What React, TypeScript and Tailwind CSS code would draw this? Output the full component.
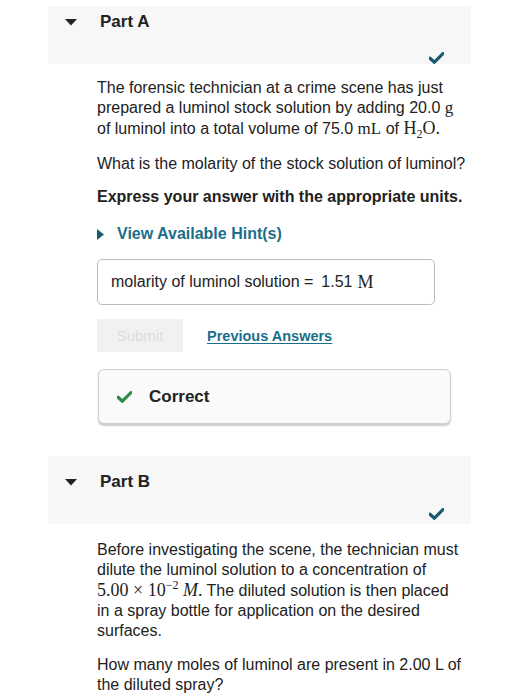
import React from 'react';

const Caret = ({ className = '' }: { className?: string }) => (
  <svg width="12" height="7" viewBox="0 0 12 7" className={className}>
    <path d="M0 0 L12 0 L6 6.5 Z" fill="#222" />
  </svg>
);

const Tick = ({ color }: { color: string }) => (
  <svg width="15" height="12" viewBox="0 0 15 12">
    <path d="M1 6.2 L5.4 10.2 L14 1.6" fill="none" stroke={color} strokeWidth="3.2" strokeLinecap="round" strokeLinejoin="round" />
  </svg>
);

const math = "font-['Liberation_Serif',serif] whitespace-nowrap";

function PartHeader({ label, tall }: { label: string; tall?: boolean }) {
  return (
    <div className={`mx-[48px] w-[423px] bg-[#f7f7f7] relative ${tall ? 'h-[68px] pt-[14px]' : 'h-[58px] pt-[4px]'}`}>
      <div className="flex items-center h-[24px]">
        <Caret className="ml-[17px]" />
        <span className="ml-[23px] text-[17px] font-bold text-[#222]">{label}</span>
      </div>
      <div className={`absolute left-[381px] ${tall ? 'top-[52px]' : 'top-[46px]'}`}>
        <Tick color="#1b5b70" />
      </div>
    </div>
  );
}

export default function App() {
  return (
    <div className="w-[528px] h-[700px] overflow-hidden bg-white font-['Liberation_Sans',Arial,sans-serif] text-[#222] pt-[6px]">
      <PartHeader label="Part A" />

      <div className="pl-[97px] pr-[56px] text-[16px] leading-[20px]">
        <p className="mt-[14px] pr-[8px]">
          The forensic technician at a crime scene has just prepared a luminol stock solution by adding 20.0{' '}
          <span className={`${math} text-[17px]`}>g</span> of luminol into a total volume of 75.0{' '}
          <span className={`${math} text-[17px]`}>mL</span> of{' '}
          <span className={`${math} text-[18px]`}>
            H<span className="relative top-[4px] text-[12px] leading-none">2</span>O.
          </span>
        </p>
        <p className="mt-[15px]">What is the molarity of the stock solution of luminol?</p>
        <p className="mt-[13px] font-bold">Express your answer with the appropriate units.</p>

        <div className="mt-[17px] flex items-center text-[#1b6e8a] font-bold">
          <svg width="7" height="11" viewBox="0 0 7 11">
            <path d="M0 0 L7 5.5 L0 11 Z" fill="#1b5b70" />
          </svg>
          <span className="ml-[13px]">View Available Hint(s)</span>
        </div>

        <div className="mt-[15px] w-[338px] h-[46px] border border-[#bdbdbd] rounded-[5px] flex items-center pl-[13px]">
          <span>molarity of luminol solution =</span>
          <span className="ml-[8px]">1.51</span>
          <span className={`${math} ml-[5px] text-[18px]`}>M</span>
        </div>

        <div className="mt-[14px] flex items-center">
          <div className="w-[86px] h-[33px] bg-[#f1f1f1] text-[#dcdcdc] flex items-center justify-center text-[15px]">
            Submit
          </div>
          <span className="ml-[24px] text-[14.5px] font-bold text-[#1b6e8a] underline underline-offset-2">
            Previous Answers
          </span>
        </div>
      </div>

      <div className="ml-[98px] mt-[17px] w-[353px] h-[55px] border border-[#cfcfcf] rounded-[6px] bg-[#fafafa] shadow-[0_1.5px_1.5px_rgba(0,0,0,0.2)] flex items-center pl-[18px]">
        <Tick color="#2e8a44" />
        <span className="ml-[17px] text-[17px] font-bold">Correct</span>
      </div>

      <div className="mt-[32px]">
        <PartHeader label="Part B" tall />
      </div>

      <div className="pl-[97px] pr-[66px] text-[16px] leading-[20px]">
        <p className="mt-[16px]">
          Before investigating the scene, the technician must dilute the luminol solution to a concentration of{' '}
          <span className={`${math} text-[18px]`}>
            5.00 × 10<span className="relative -top-[7px] text-[12px] leading-none">−2</span> <i>M</i>.
          </span>{' '}
          The diluted solution is then placed in a spray bottle for application on the desired surfaces.
        </p>
        <p className="mt-[14px]">How many moles of luminol are present in 2.00 L of the diluted spray?</p>
      </div>
    </div>
  );
}
